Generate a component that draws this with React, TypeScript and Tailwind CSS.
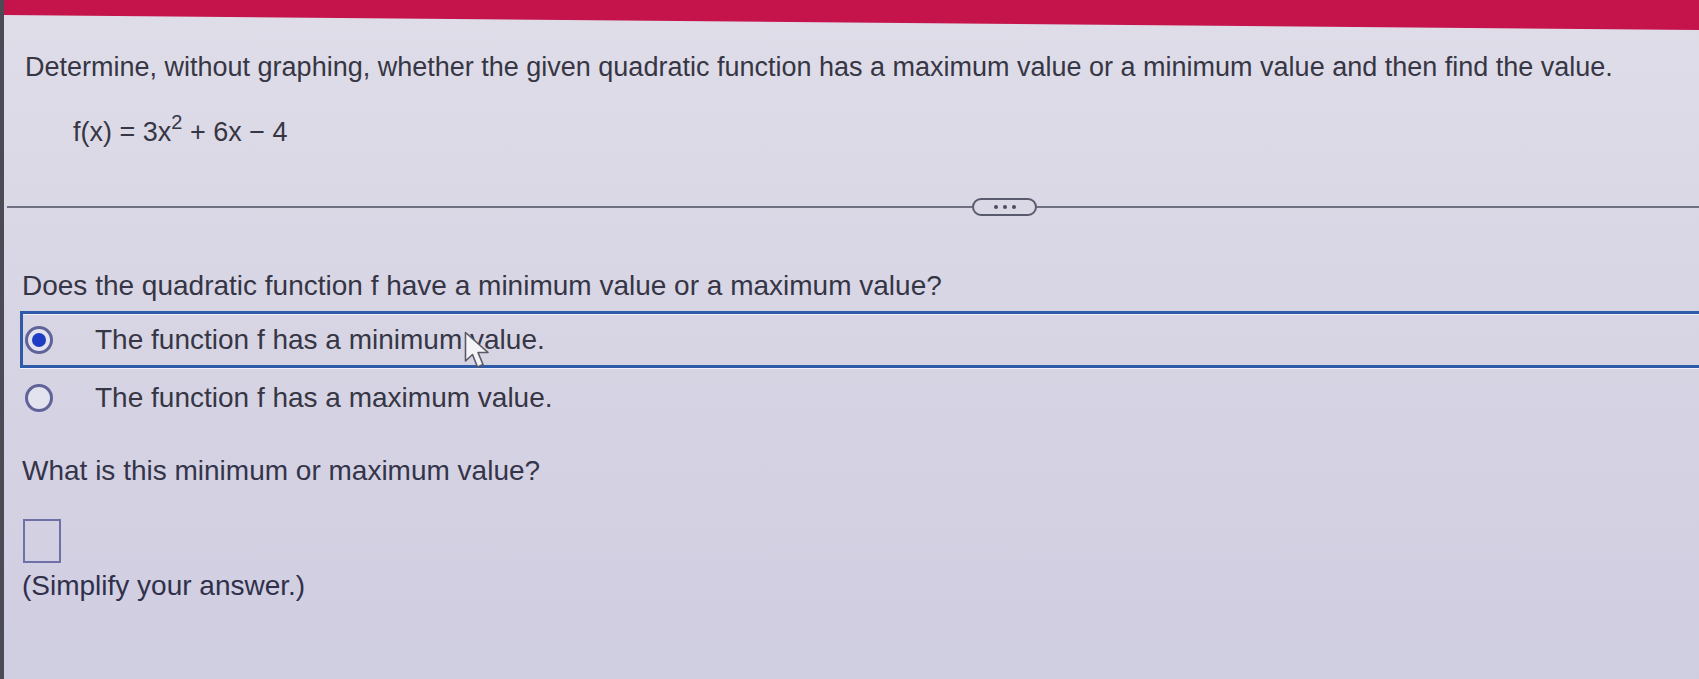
import React from "react";

// Question card from an online homework page (photographed screen)

function Radio({ checked }: { checked?: boolean }) {
  return (
    <span className="flex h-[28px] w-[28px] shrink-0 items-center justify-center rounded-full border-[3px] border-[#5f6398] bg-[#e2e3ef]">
      {checked && <span className="h-[14px] w-[14px] rounded-full bg-[#1f3cc2]" />}
    </span>
  );
}

function Cursor() {
  return (
    <svg
      className="absolute left-[460px] top-[331px]"
      width="28"
      height="40"
      viewBox="0 0 28 40"
    >
      <path
        d="M1.5 1.5 L1.5 30 L8.5 23.5 L13.5 36 L19 33.5 L14 21.5 L24 21.5 Z"
        fill="#f4f4f8"
        stroke="#5a5a66"
        strokeWidth="1.6"
        strokeLinejoin="round"
      />
    </svg>
  );
}

export default function App() {
  return (
    <div className="relative h-[679px] w-full overflow-hidden border-l-[4px] border-[#4b4b56] bg-gradient-to-b from-[#dfdde8] to-[#cfcde0] font-['Liberation_Sans',Arial,sans-serif]">
      {/* top bar */}
      <div className="h-[30px] bg-[#c5144b] [clip-path:polygon(0_0,100%_0,100%_100%,0_50%)]" />

      <p className="mt-[22px] pl-[21px] text-[27px] leading-[31px] text-[#363644]">
        Determine, without graphing, whether the given quadratic function has a maximum value or a minimum value and then find the value.
      </p>

      <p className="mt-[34px] h-[31px] pl-[69px] text-[27px] leading-[31px] text-[#363644]">
        f(x) = 3x
        <span className="relative -top-[12px] text-[20px] leading-none">2</span> + 6x − 4
      </p>

      {/* divider with expand pill */}
      <div className="mt-[50px] flex h-[18px] items-center">
        <div className="ml-[3px] h-[2px] w-[965px] bg-[#6f6f82]" />
        <div className="flex h-[18px] w-[65px] items-center justify-center gap-[5px] rounded-full border-[2px] border-[#5a5a6e]">
          <span className="h-[4px] w-[4px] rounded-full bg-[#4d4d60]" />
          <span className="h-[4px] w-[4px] rounded-full bg-[#4d4d60]" />
          <span className="h-[4px] w-[4px] rounded-full bg-[#4d4d60]" />
        </div>
        <div className="h-[2px] flex-1 bg-[#6f6f82]" />
      </div>

      <p className="mt-[54px] pl-[18px] text-[28px] leading-[32px] text-[#353545]">
        Does the quadratic function f have a minimum value or a maximum value?
      </p>

      <div className="mt-[9px] ml-[16px] flex h-[57px] items-center border-[3px] border-r-0 border-[#2e5aa8] pl-[2px] shadow-[inset_0_1px_0_#eef0fa,0_1px_0_#eef0fa]">
        <Radio checked />
        <span className="ml-[42px] text-[28px] leading-[32px] text-[#363644]">The function f has a minimum value.</span>
      </div>

      <div className="mt-[3px] ml-[16px] flex h-[53px] items-center border-[3px] border-transparent pl-[2px]">
        <Radio />
        <span className="ml-[42px] text-[28px] leading-[32px] text-[#363644]">The function f has a maximum value.</span>
      </div>

      <p className="mt-[31px] pl-[18px] text-[28px] leading-[32px] text-[#34344a]">
        What is this minimum or maximum value?
      </p>

      <div className="mt-[32px] ml-[19px] h-[44px] w-[38px] border-[2px] border-[#6d71a8]" />

      <p className="mt-[7px] pl-[18px] text-[28px] leading-[32px] text-[#30304c]">
        (Simplify your answer.)
      </p>

      <Cursor />
    </div>
  );
}
